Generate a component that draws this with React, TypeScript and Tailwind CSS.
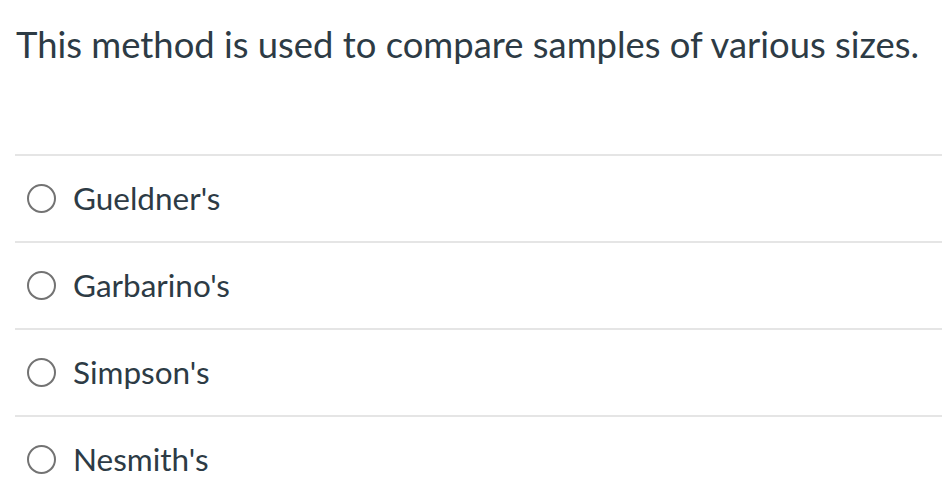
export default function App() {
  const options = ["Gueldner's", "Garbarino's", "Simpson's", "Nesmith's"]

  return (
    <div className="w-[942px] h-[492px] bg-white overflow-hidden text-[#2d3b45] font-['Lato',sans-serif]">
      <p className="pl-[16px] pt-[21px] text-[36.4px] leading-[46px] whitespace-nowrap">
        This method is used to compare samples of various sizes.
      </p>
      <div className="ml-[15px] mt-[87px]">
        {options.map((opt) => (
          <div key={opt} className="border-t-2 border-[#e5e5e5] h-[87px] flex items-center">
            <span className="ml-[12px] w-[29px] h-[29px] rounded-full border-2 border-[#737373] shrink-0" />
            <span className="ml-[17px] text-[31.5px] leading-none">{opt}</span>
          </div>
        ))}
      </div>
    </div>
  )
}
